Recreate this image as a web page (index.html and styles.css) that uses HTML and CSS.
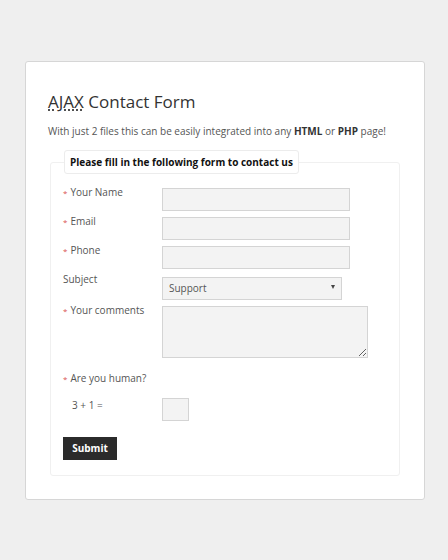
FILE: index.html
```html
<!DOCTYPE html>
<html lang="en">
<head>
  <meta charset="UTF-8">
  <title>AJAX Contact Form</title>
  <link rel="stylesheet" href="styles.css">
</head>
<body>
  <div class="card">
    <h2 class="title"><abbr title="Asynchronous JavaScript And XML">AJAX</abbr> Contact Form</h2>
    <p class="intro">With just 2 files this can be easily integrated into any <strong>HTML</strong> or <strong>PHP</strong> page!</p>

    <form class="contact">
      <fieldset>
        <legend>Please fill in the following form to contact us</legend>

        <div class="grid">
          <label class="req" for="name">Your Name</label>
          <input id="name" type="text" class="field">

          <label class="req" for="email">Email</label>
          <input id="email" type="text" class="field">

          <label class="req" for="phone">Phone</label>
          <input id="phone" type="text" class="field">

          <label for="subject">Subject</label>
          <div class="select-wrap">
            <select id="subject">
              <option>Support</option>
              <option>Sales</option>
              <option>Other</option>
            </select>
          </div>

          <label class="req" for="comments">Your comments</label>
          <textarea id="comments"></textarea>
        </div>

        <div class="human">
          <label class="req">Are you human?</label>
          <div class="captcha">
            <span class="sum">3 + 1 =</span>
            <input type="text" class="answer">
          </div>
        </div>

        <button type="submit" class="submit">Submit</button>
      </fieldset>
    </form>
  </div>
</body>
</html>
```

FILE: styles.css
```css
body {
  margin: 0;
  padding: 61px 23px 40px 25px;
  background: #efefef;
  font-family: "Open Sans", "Liberation Sans", sans-serif;
  color: #555;
}
.card {
  width: 400px;
  box-sizing: border-box;
  background: #fff;
  border: 1px solid #d6d6d6;
  border-radius: 3px;
  padding: 28px 22px 23px 22px;
}
.title {
  margin: 0;
  font-size: 17px;
  font-weight: normal;
  color: #333;
  line-height: 24px;
}
.title abbr {
  text-decoration: underline dotted;
  text-underline-offset: 2px;
}
.intro {
  margin: 9px 0 0;
  font-size: 10px;
  line-height: 16px;
  color: #555;
}
.intro strong {
  color: #333;
}
fieldset {
  margin: 11px 2px 0;
  border: 1px solid #f0f0f0;
  border-radius: 3px;
  padding: 14px 12px 15px 12px;
}
legend {
  margin-left: 1px;
  padding: 4px 5px;
  border: 1px solid #ececec;
  border-radius: 3px;
  background: #fff;
  font-size: 10px;
  font-weight: bold;
  color: #111;
  line-height: 14px;
}
.grid {
  display: grid;
  grid-template-columns: 99px auto;
  row-gap: 6px;
  align-items: start;
  justify-items: start;
}
label {
  font-size: 10px;
  line-height: 15px;
  color: #555;
  margin-top: -3px;
}
.req::before {
  content: "*";
  color: #d9534f;
  font-size: 8px;
  margin-right: 3px;
}
.field, textarea, select, .answer {
  box-sizing: border-box;
  background: #f3f3f3;
  border: 1px solid #d4d4d4;
  border-radius: 0;
  font-family: inherit;
  font-size: 10px;
  color: #555;
  margin: 0;
}
.field {
  width: 188px;
  height: 23px;
}
.select-wrap {
  position: relative;
}
select {
  appearance: none;
  width: 180px;
  height: 23px;
  padding: 0 6px;
}
.select-wrap::after {
  content: "";
  position: absolute;
  right: 7px;
  top: 10px;
  border-left: 2px solid transparent;
  border-right: 2px solid transparent;
  border-top: 4px solid #444;
  pointer-events: none;
}
textarea {
  width: 206px;
  height: 52px;
  resize: both;
}
.human {
  margin-top: 16px;
}
.human label {
  display: block;
}
.captcha {
  display: grid;
  grid-template-columns: 99px auto;
  margin-top: 12px;
}
.sum {
  font-size: 10px;
  color: #555;
  padding-left: 9px;
  line-height: 15px;
}
.answer {
  width: 27px;
  height: 23px;
}
.submit {
  display: block;
  margin-top: 16px;
  background: #2b2b2b;
  color: #fff;
  border: 0;
  border-radius: 0;
  width: 54px;
  height: 23px;
  font-family: inherit;
  font-size: 10px;
  font-weight: bold;
  padding: 0;
}
```
